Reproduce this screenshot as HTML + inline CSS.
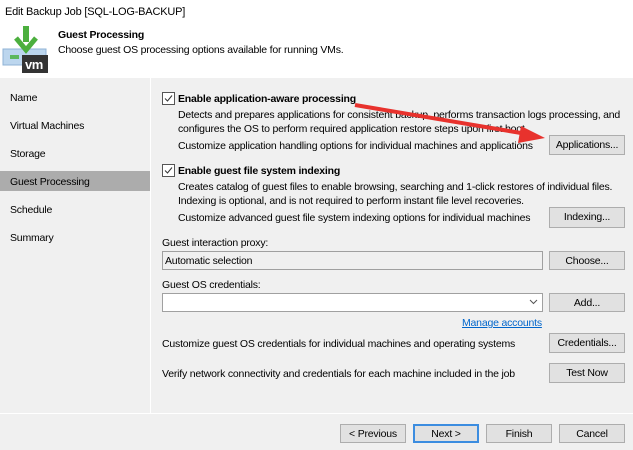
<!DOCTYPE html>
<html><head><meta charset="utf-8"><style>
*{margin:0;padding:0;box-sizing:border-box}
body{width:633px;height:450px;overflow:hidden;background:#f0f0f0;font-family:"Liberation Sans",sans-serif;font-size:10.5px;letter-spacing:-0.2px;color:#000;position:relative}
.a{position:absolute;white-space:nowrap;line-height:14px}
.b{font-weight:bold}
.btn{position:absolute;background:#e1e1e1;border:1px solid #adadad;text-align:center;line-height:18px}
.cb{position:absolute;width:13px;height:13px;border:1px solid #555;background:#fff}
.side{position:absolute;left:10px}
</style></head><body>
<div style="position:absolute;left:0;top:0;width:633px;height:78px;background:#fff"></div>
<div class="a" style="left:5px;top:5px;font-size:11px">Edit Backup Job [SQL-LOG-BACKUP]</div>
<svg style="position:absolute;left:0;top:26px" width="52" height="50">
<rect x="3" y="23" width="43" height="16" fill="#bcd6ee" stroke="#8fb3d6"/>
<rect x="10" y="29" width="9" height="4" fill="#5cb85c"/>
<rect x="23" y="0" width="6" height="16" fill="#4caf3e"/>
<path d="M16 12 L26 24 L36 12" stroke="#4caf3e" stroke-width="5" fill="none"/>
<rect x="22" y="29" width="26" height="18" fill="#333"/>
<text x="25" y="43" fill="#fff" font-family="Liberation Sans" font-size="13" font-weight="bold" letter-spacing="-0.5">vm</text>
</svg>
<div class="a b" style="left:58px;top:28px">Guest Processing</div>
<div class="a" style="left:58px;top:43px">Choose guest OS processing options available for running VMs.</div>
<div style="position:absolute;left:150px;top:78px;width:1px;height:335px;background:#fff"></div>
<div style="position:absolute;left:0;top:171px;width:150px;height:20px;background:#acacac"></div>
<div class="a side" style="top:91px">Name</div>
<div class="a side" style="top:119px">Virtual Machines</div>
<div class="a side" style="top:147px">Storage</div>
<div class="a side" style="top:175px">Guest Processing</div>
<div class="a side" style="top:203px">Schedule</div>
<div class="a side" style="top:231px">Summary</div>

<svg style="position:absolute;left:162px;top:92px" width="13" height="13"><rect x="0.5" y="0.5" width="12" height="12" fill="#fff" stroke="#555"/><path d="M3 6.5 L5.5 9 L10 3.5" stroke="#333" fill="none"/></svg>
<div class="a b" style="left:178px;top:92px">Enable application-aware processing</div>
<div class="a" style="left:178px;top:108px">Detects and prepares applications for consistent backup, performs transaction logs processing, and</div>
<div class="a" style="left:178px;top:122px">configures the OS to perform required application restore steps upon first boot.</div>
<div class="a" style="left:178px;top:139px">Customize application handling options for individual machines and applications</div>
<div class="btn" style="left:549px;top:135px;width:76px;height:20px">Applications...</div>

<svg style="position:absolute;left:162px;top:164px" width="13" height="13"><rect x="0.5" y="0.5" width="12" height="12" fill="#fff" stroke="#555"/><path d="M3 6.5 L5.5 9 L10 3.5" stroke="#333" fill="none"/></svg>
<div class="a b" style="left:178px;top:164px">Enable guest file system indexing</div>
<div class="a" style="left:178px;top:180px">Creates catalog of guest files to enable browsing, searching and 1-click restores of individual files.</div>
<div class="a" style="left:178px;top:194px">Indexing is optional, and is not required to perform instant file level recoveries.</div>
<div class="a" style="left:178px;top:211px">Customize advanced guest file system indexing options for individual machines</div>
<div class="btn" style="left:549px;top:207px;width:76px;height:21px">Indexing...</div>

<div class="a" style="left:162px;top:236px">Guest interaction proxy:</div>
<div style="position:absolute;left:162px;top:251px;width:381px;height:19px;border:1px solid #a0a0a0;background:#f0f0f0"></div>
<div class="a" style="left:165px;top:254px">Automatic selection</div>
<div class="btn" style="left:549px;top:251px;width:76px;height:19px">Choose...</div>
<div class="a" style="left:162px;top:278px">Guest OS credentials:</div>
<div style="position:absolute;left:162px;top:293px;width:381px;height:19px;border:1px solid #a0a0a0;background:#fff"></div>
<svg style="position:absolute;left:529px;top:299px" width="9" height="6"><path d="M1 1 L4.5 4.5 L8 1" stroke="#555" fill="none"/></svg>
<div class="btn" style="left:549px;top:293px;width:76px;height:19px">Add...</div>
<div class="a" style="left:462px;top:316px;color:#0066cc;text-decoration:underline">Manage accounts</div>
<div class="a" style="left:162px;top:337px">Customize guest OS credentials for individual machines and operating systems</div>
<div class="btn" style="left:549px;top:333px;width:76px;height:20px">Credentials...</div>
<div class="a" style="left:162px;top:367px">Verify network connectivity and credentials for each machine included in the job</div>
<div class="btn" style="left:549px;top:363px;width:76px;height:20px">Test Now</div>

<div style="position:absolute;left:0;top:413px;width:633px;height:1px;background:#fff"></div>
<div class="btn" style="left:340px;top:424px;width:66px;height:19px">&lt; Previous</div>
<div class="btn" style="left:413px;top:424px;width:66px;height:19px;border:2px solid #3c8de0;line-height:16px">Next &gt;</div>
<div class="btn" style="left:486px;top:424px;width:66px;height:19px">Finish</div>
<div class="btn" style="left:559px;top:424px;width:66px;height:19px">Cancel</div>

<svg style="position:absolute;left:0;top:0" width="633" height="450">
<path d="M355 105 L527 134" stroke="#e8322d" stroke-width="4" fill="none"/>
<path d="M545 138 L521 126 L518 143 Z" fill="#e8322d"/>
</svg>
</body></html>
